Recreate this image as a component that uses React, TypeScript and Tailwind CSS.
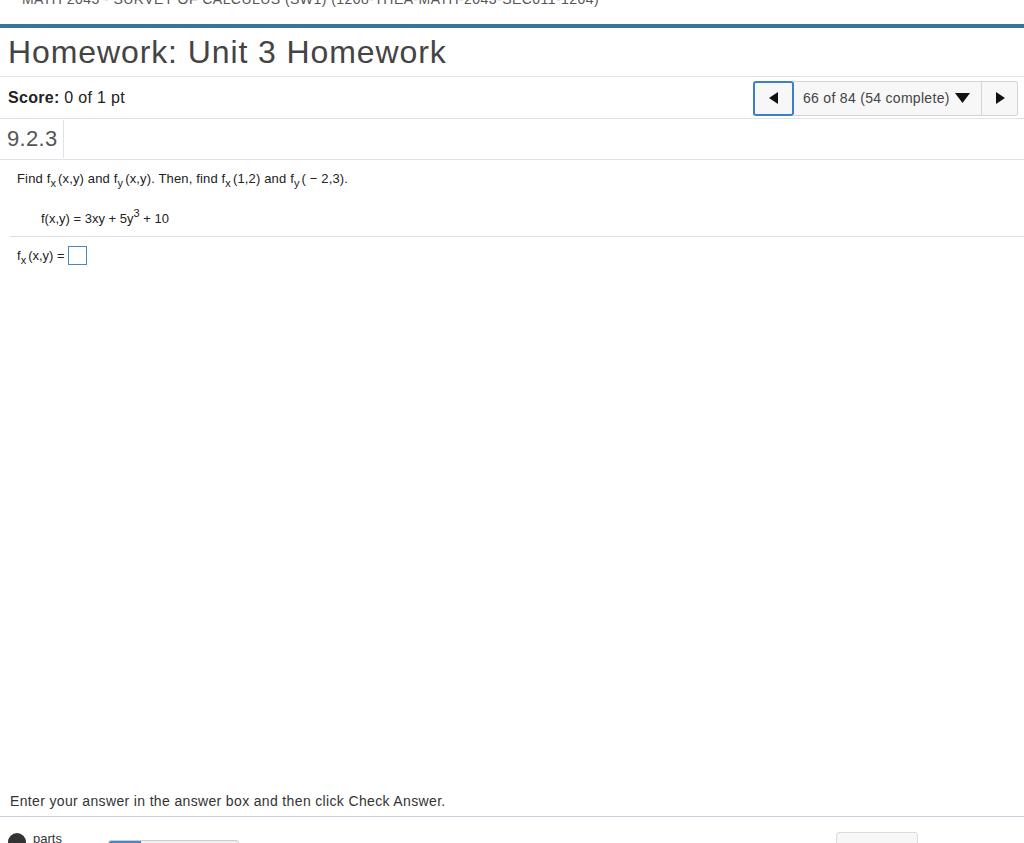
import React from 'react'

function Sub({ children }: { children: React.ReactNode }) {
  return <span className="relative top-[4px] text-[11px] leading-none mr-[2px]">{children}</span>
}

function Sup({ children }: { children: React.ReactNode }) {
  return <span className="relative top-[-6px] text-[11px] leading-none">{children}</span>
}

export default function App() {
  return (
    <div className="w-[1024px] h-[843px] overflow-hidden bg-white flex flex-col font-['Liberation_Sans',Arial,sans-serif]">
      {/* course title, cut off at the top edge */}
      <div className="h-[24px] overflow-hidden pl-[22px]">
        <div className="mt-[-8px] text-[14px] leading-[14px] tracking-[0.45px] text-[#555] whitespace-nowrap">
          MATH 2043 - SURVEY OF CALCULUS (SW1) (1208-THEA-MATH-2043-SEC011-1204)
        </div>
      </div>
      <div className="h-[4px] bg-[#337799]" />

      <div className="h-[49px] border-b border-[#dfe3e8] pl-[8px]">
        <h1 className="text-[32px] leading-[48px] tracking-[0.9px] text-[#444] whitespace-nowrap">Homework: Unit 3 Homework</h1>
      </div>

      {/* score + nav */}
      <div className="h-[42px] border-b border-[#dfe3e8] flex items-center justify-between pl-[8px] pr-[6px]">
        <div className="text-[16px] tracking-[0.3px] text-[#222]">
          <span className="font-bold">Score:</span> 0 of 1 pt
        </div>
        <div className="flex h-[35px] mt-[1px]">
          <button className="w-[41px] h-full rounded-[3px] border-2 border-[#3b7fcc] bg-[#f7f7f7] flex items-center justify-center">
            <svg width="10" height="12" viewBox="0 0 10 12"><path d="M9 0 L0 6 L9 12 Z" fill="#111" /></svg>
          </button>
          <button className="w-[188px] h-full border-y border-r border-[#d4d4d4] bg-[#f7f7f7] flex items-center pl-[9px] gap-[5px] text-[14px] tracking-[0.3px] text-[#444]">
            <span>66 of 84 (54 complete)</span>
            <svg width="15" height="10" viewBox="0 0 15 10"><path d="M0 0 L15 0 L7.5 10 Z" fill="#111" /></svg>
          </button>
          <button className="w-[36px] h-full rounded-r-[3px] border-y border-r border-[#d4d4d4] bg-[#f7f7f7] flex items-center justify-center">
            <svg width="10" height="12" viewBox="0 0 10 12"><path d="M1 0 L10 6 L1 12 Z" fill="#111" /></svg>
          </button>
        </div>
      </div>

      {/* question number */}
      <div className="h-[41px] border-b border-[#dfe3e8] flex">
        <div className="w-[64px] border-r border-[#dfe3e8] my-[1px] pl-[7px] text-[22px] leading-[38px] tracking-[0.3px] text-[#555]">9.2.3</div>
      </div>

      {/* question body */}
      <div className="flex-1 text-[13px] text-[#222]">
        <div className="pl-[17px] pt-[10px] leading-[18px] tracking-[0.15px]">
          Find f<Sub>x</Sub>(x,y) and f<Sub>y</Sub>(x,y). Then, find f<Sub>x</Sub>(1,2) and f<Sub>y</Sub>( − 2,3).
        </div>
        <div className="pl-[41px] mt-[22px] leading-[18px]">
          f(x,y) = 3xy + 5y<Sup>3</Sup> + 10
        </div>
        <div className="ml-[10px] mt-[8px] border-b border-[#d9dee4]" />
        <div className="pl-[17px] mt-[9px] flex items-center gap-[3px] leading-[18px]">
          <span>f<Sub>x</Sub>(x,y) =</span>
          <span className="w-[19px] h-[19px] border border-[#4a86c5] bg-white" />
        </div>
      </div>

      {/* instructions */}
      <div className="h-[26px] border-b border-[#c8d0db] pl-[10px] text-[14px] leading-[20px] tracking-[0.35px] text-[#333]">
        Enter your answer in the answer box and then click Check Answer.
      </div>

      {/* footer, cut off at the bottom edge */}
      <div className="h-[26px] relative flex items-start">
        <div className="ml-[8px] mt-[16px] w-[18px] h-[18px] rounded-full bg-[#333]" />
        <div className="ml-[7px] mt-[15px] text-[13px] leading-[13px] text-[#333]">parts</div>
        <div className="ml-[46px] mt-[23px] w-[131px] h-[8px] rounded-[3px] border border-[#ccc] bg-[#f0f0f0] overflow-hidden">
          <div className="w-[32px] h-full bg-[#4a86c5]" />
        </div>
        <div className="ml-auto mr-[106px] mt-[15px] w-[82px] h-[28px] rounded-[3px] border border-[#dcdcdc] bg-[#f7f7f7] text-[13px] text-[#bbb] pl-[14px] pt-[6px]">
          Check Answer
        </div>
      </div>
    </div>
  )
}
